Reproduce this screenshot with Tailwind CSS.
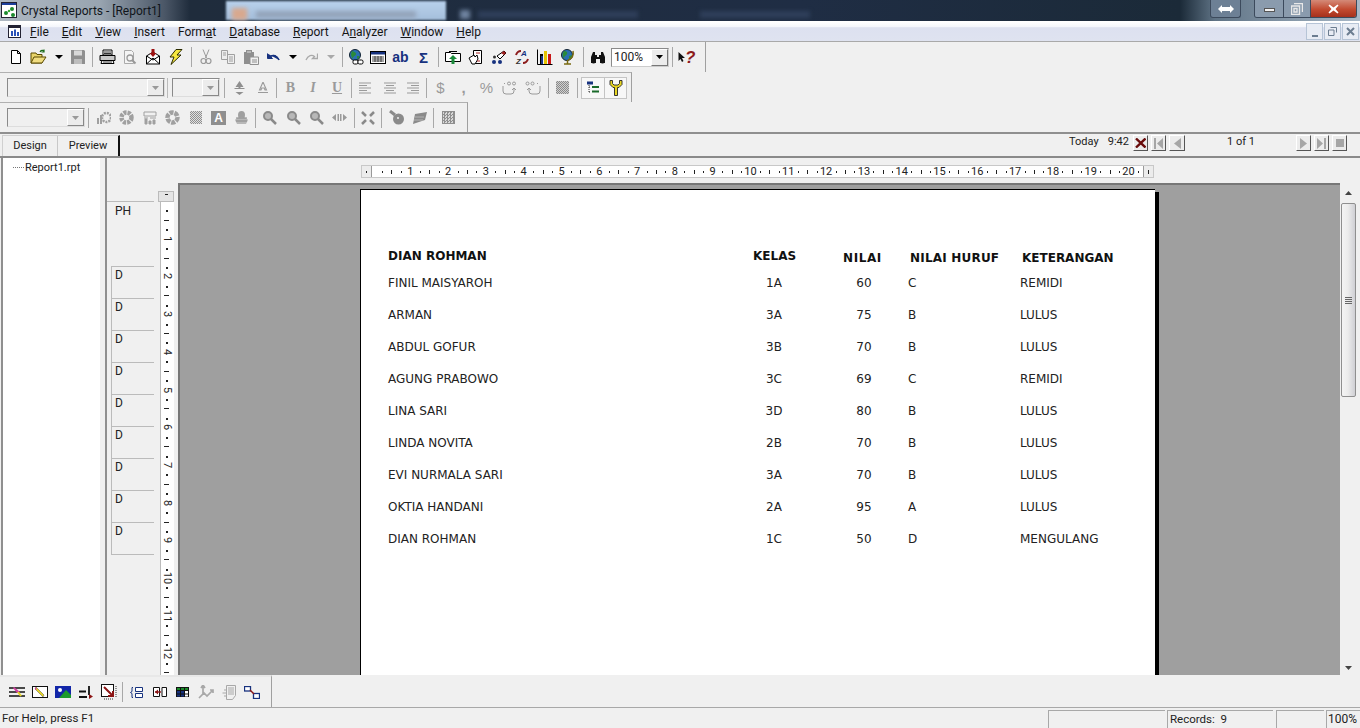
<!DOCTYPE html>
<html>
<head>
<meta charset="utf-8">
<title>Crystal Reports - [Report1]</title>
<script src="https://cdn.jsdelivr.net/npm/@tailwindcss/browser@4"></script>
</head>
<body class="w-[1360px] h-[728px] overflow-hidden bg-[#f0f0f0] text-[12px] text-[#111] font-['Roboto','Liberation_Sans',sans-serif]">

<!-- title bar -->
<div class="relative h-[21px] flex items-center overflow-hidden bg-[linear-gradient(90deg,#aeb8c2_0px,#98a4b0_100px,#4a5666_165px,#1f2c3c_190px,#1f2d44_800px,#1b2a38_1180px,#5f7385_1215px,#a9b9c8_1360px)]">
  <!-- blurred windows showing through the glass -->
  <div class="absolute left-[226px] top-[1px] w-[220px] h-[19px] bg-[linear-gradient(180deg,#b9d2ec,#a5bfdb)] blur-[1px]"></div>
  <div class="absolute left-[232px] top-[8px] w-[15px] h-[12px] bg-[#d8a88e] blur-[2px]"></div>
  <div class="absolute left-[256px] top-[11px] w-[160px] h-[7px] bg-[#93a3b9] blur-[2px]"></div>
  <div class="absolute left-[460px] top-[10px] w-[10px] h-[9px] bg-[#6f84a0] blur-[2px]"></div>
  <div class="absolute left-[478px] top-[11px] w-[160px] h-[7px] bg-[#2f3f5a] blur-[2px]"></div>
  <div class="absolute left-[700px] top-[11px] w-[110px] h-[7px] bg-[#2f3f5a] blur-[2px]"></div>
  <svg class="relative ml-[1px] w-[17px] h-[17px] shrink-0" viewBox="0 0 17 17"><rect x="0.5" y="0.5" width="15" height="15" fill="#fff" stroke="#223"/><rect x="1" y="1" width="14" height="2" fill="#1c3f9c"/><circle cx="5" cy="11" r="2" fill="#1c8a2e"/><circle cx="11" cy="7" r="2" fill="#1c8a2e"/><circle cx="12" cy="13" r="2" fill="#1c8a2e"/><circle cx="8" cy="9" r="1.2" fill="#3a3"/></svg>
  <span class="relative ml-[3px] text-[12px] text-[#10151b]">Crystal Reports - [Report1]</span>
  <div class="absolute left-[1210px] top-0 w-[31px] h-[18px] border border-t-0 border-[#3c4a5c] rounded-b-[3px] flex items-center justify-center bg-[#6d8095]">
    <svg class="w-[16px] h-[8px]" viewBox="0 0 16 8"><path d="M0 4l4-4v2h8V0l4 4-4 4V6H4v2z" fill="#fff"/></svg>
  </div>
  <div class="absolute left-[1254px] top-0 w-[103px] h-[18px] border border-t-0 border-[#3c4a5c] rounded-b-[3px] flex overflow-hidden">
    <div class="w-[29px] flex items-center justify-center bg-[#8a9bad] border-r border-[#3c4a5c]"><span class="block w-[11px] h-[4px] bg-[#f2f2f2] border border-[#555] mt-[2px]"></span></div>
    <div class="w-[27px] flex items-center justify-center bg-[#8a9bad] border-r border-[#3c4a5c]"><svg class="w-[12px] h-[12px]" viewBox="0 0 12 12"><path d="M3 0.5h8.5V9M0.5 3h8v8.5h-8zM3 5.5h3v3.5H3z" fill="none" stroke="#e8e8e8" stroke-width="1.4"/></svg></div>
    <div class="flex-1 flex items-center justify-center bg-[linear-gradient(180deg,#d48a78,#c24a30_55%,#a5301c)]"><svg class="w-[11px] h-[10px]" viewBox="0 0 11 10"><path d="M1.5 0.5l4 3 4-3 1 1-3 3.500 3 3.500-1 1-4-3-4 3-1-1 3-3.500-3-3.500z" fill="#fff"/></svg></div>
  </div>
</div>

<!-- menu bar -->
<div class="relative h-[21px] flex items-center border-t border-[#fff] border-b border-b-[#a9a9a9] bg-[linear-gradient(180deg,#fff_0%,#f4f6fb_25%,#dde1f0_30%,#dfe3f0_100%)]">
  <svg class="ml-[8px] w-[14px] h-[14px]" viewBox="0 0 14 14"><rect x="0.5" y="0.5" width="12" height="12" fill="#fff" stroke="#223"/><rect x="1" y="1" width="11" height="2" fill="#223"/><rect x="3" y="6" width="2" height="5" fill="#2a52b8"/><rect x="6" y="4.500" width="2" height="6.500" fill="#2a52b8"/><rect x="9" y="7" width="2" height="4" fill="#2a52b8"/></svg>
  <nav class="flex ml-[8px] text-[12px] text-[#151515] gap-[13px]">
    <span><u>F</u>ile</span><span><u>E</u>dit</span><span><u>V</u>iew</span><span><u>I</u>nsert</span><span>Form<u>a</u>t</span><span><u>D</u>atabase</span><span><u>R</u>eport</span><span>A<u>n</u>alyzer</span><span><u>W</u>indow</span><span><u>H</u>elp</span>
  </nav>
  <div class="absolute right-0 top-[1px] flex gap-[1px] pr-[1px]">
    <div class="w-[17px] h-[17px] border border-[#b6c4d6] flex items-end justify-center pb-[2px] bg-[#e8ecf4]"><span class="block w-[6px] h-[2px] bg-[#6c7d90]"></span></div>
    <div class="w-[17px] h-[17px] border border-[#b6c4d6] flex items-center justify-center bg-[#e8ecf4]"><svg class="w-[9px] h-[9px]" viewBox="0 0 9 9"><path d="M2.500 0.500h6v5M0.500 3h5.500v5.500h-5.500z" fill="none" stroke="#6c7d90"/></svg></div>
    <div class="w-[17px] h-[17px] border border-[#b6c4d6] flex items-center justify-center bg-[#e8ecf4]"><svg class="w-[9px] h-[9px]" viewBox="0 0 9 9"><path d="M1 1l7 7M8 1L1 8" stroke="#6c7d90" stroke-width="2"/></svg></div>
  </div>
</div>

<!-- toolbar 1 -->
<div class="h-[30px] w-[706px] flex items-center pl-[4px] border-r border-[#a0a0a0]">
  <i class="w-[23px] flex justify-center"><svg class="w-[16px] h-[16px]" viewBox="0 0 16 16"><path d="M3.500 1.500h6l3 3v10h-9zM9.500 1.500v3h3" fill="#fff" stroke="#000"/></svg></i>
  <i class="w-[23px] flex justify-center"><svg class="w-[17px] h-[16px]" viewBox="0 0 17 16"><path d="M1 14V4h5l1 1.500h5V14z" fill="#e8d46a" stroke="#5a4a00"/><path d="M1 14l3-6h12l-4 6z" fill="#f0dc80" stroke="#5a4a00"/><path d="M10 3c1-2 3-2 4-1M14 0.500v2.500h-2.500" fill="none" stroke="#1a6a1a" stroke-width="1.200"/></svg></i>
  <i class="w-[18px] flex justify-center"><svg class="w-[8px] h-[4px]" viewBox="0 0 8 4"><path d="M0 0h8L4 4z" fill="#000"/></svg></i>
  <i class="w-[20px] flex justify-center"><svg class="w-[16px] h-[16px]" viewBox="0 0 16 16"><path d="M1 1h13l1 1v13H1z" fill="#8f8f8f"/><rect x="4" y="1.500" width="8" height="5" fill="#d8d8d8"/><rect x="4" y="10" width="8" height="5" fill="#bdbdbd"/></svg></i>
  <b class="w-[9px] flex justify-center"><s class="block w-[1px] h-[20px] bg-[#a8a8a8]"></s></b>
  <i class="w-[21px] flex justify-center"><svg class="w-[17px] h-[16px]" viewBox="0 0 17 16"><path d="M4 1h9v5H4z" fill="#fff" stroke="#000"/><path d="M1 6.500h15v5H1z" fill="#c8c8c8" stroke="#000"/><path d="M3 11.500h11l1 3H2z" fill="#fff" stroke="#000"/><path d="M5 3h7M5 4.500h7M4 13h9" stroke="#000" stroke-width="0.800"/></svg></i>
  <i class="w-[24px] flex justify-center"><svg class="w-[16px] h-[16px]" viewBox="0 0 16 16"><path d="M2.500 1.500h7l2 2v11h-9z" fill="#f4f4f4" stroke="#aaa"/><circle cx="8" cy="9" r="3" fill="none" stroke="#999" stroke-width="1.300"/><path d="M10 11l3.500 3.500" stroke="#999" stroke-width="2"/></svg></i>
  <i class="w-[22px] flex justify-center"><svg class="w-[16px] h-[16px]" viewBox="0 0 16 16"><path d="M1.500 7l6.500-4 6.500 4v8h-13z" fill="#fff" stroke="#000"/><path d="M1.500 15L8 9l6.500 6M1.500 7L8 11l6.500-4" fill="none" stroke="#000"/><path d="M6.500 0h3v4h2L8 8 4.500 4h2z" fill="#9c1010"/></svg></i>
  <i class="w-[23px] flex justify-center"><svg class="w-[15px] h-[16px]" viewBox="0 0 15 16"><path d="M8 0.500h6L9 6h4L3 15.500 6 8H2z" fill="#f6e840" stroke="#2a2a00"/></svg></i>
  <b class="w-[8px] flex justify-center"><s class="block w-[1px] h-[20px] bg-[#a8a8a8]"></s></b>
  <i class="w-[21px] flex justify-center"><svg class="w-[12px] h-[16px]" viewBox="0 0 12 16"><path d="M3 0.500L6.500 9M9 0.500L5.500 9" stroke="#9a9a9a" fill="none"/><circle cx="3.500" cy="12" r="2.500" fill="none" stroke="#9a9a9a" stroke-width="1.200"/><circle cx="8.500" cy="12" r="2.500" fill="none" stroke="#9a9a9a" stroke-width="1.200"/></svg></i>
  <i class="w-[23px] flex justify-center"><svg class="w-[16px] h-[14px]" viewBox="0 0 16 14"><path d="M1.500 0.500h6v9h-6zM7.500 4.500h7v9h-7z" fill="#eee" stroke="#a0a0a0"/><path d="M3 3h3M3 5h3M9 7h4M9 9h4M9 11h4" stroke="#a0a0a0"/></svg></i>
  <i class="w-[23px] flex justify-center"><svg class="w-[16px] h-[15px]" viewBox="0 0 16 15"><path d="M1 2h10v12H1z" fill="#8f8f8f"/><rect x="3.500" y="0.500" width="5" height="3" fill="#b8b8b8" stroke="#8f8f8f"/><path d="M7 7h8.500v7.500H7z" fill="#f0f0f0" stroke="#8f8f8f"/><path d="M9 10h5M9 12h5" stroke="#8f8f8f"/></svg></i>
  <i class="w-[23px] flex justify-center"><svg class="w-[13px] h-[9px]" viewBox="0 0 13 9"><path d="M0.500 0.500v5h5L3.500 3.500C6 1.500 10 2 12 7" fill="#17327f" stroke="#17327f" stroke-linejoin="round"/><path d="M3.500 3.500C6 1.500 10 2 12 7" fill="none" stroke="#17327f" stroke-width="1.500"/></svg></i>
  <i class="w-[16px] flex justify-center"><svg class="w-[8px] h-[4px]" viewBox="0 0 8 4"><path d="M0 0h8L4 4z" fill="#000"/></svg></i>
  <i class="w-[21px] flex justify-center"><svg class="w-[13px] h-[9px]" viewBox="0 0 13 9"><path d="M12.500 0.500v5h-5l2-2C7 1.500 3 2 1 7" fill="none" stroke="#a9a9a9" stroke-width="1.300"/></svg></i>
  <i class="w-[17px] flex justify-center"><svg class="w-[8px] h-[4px]" viewBox="0 0 8 4"><path d="M0 0h8L4 4z" fill="#a9a9a9"/></svg></i>
  <b class="w-[6px] flex justify-center"><s class="block w-[1px] h-[20px] bg-[#a8a8a8]"></s></b>
  <i class="w-[21px] flex justify-center"><svg class="w-[16px] h-[16px]" viewBox="0 0 16 16"><circle cx="7" cy="6" r="5.500" fill="#2a6fb0" stroke="#123"/><path d="M4 2c2 1 4 1 4 3S5 7 5 9 3 7 3 5zM9 7c2 0 3 0 2 2l-2 1z" fill="#2a8a3a"/><rect x="5" y="11" width="5" height="4" rx="1.500" fill="#fff" stroke="#000"/><rect x="10" y="11" width="5" height="4" rx="1.500" fill="#fff" stroke="#000"/></svg></i>
  <i class="w-[23px] flex justify-center"><svg class="w-[16px] h-[13px]" viewBox="0 0 16 13"><rect x="0.500" y="0.500" width="15" height="12" fill="#fff" stroke="#000"/><rect x="1" y="1" width="14" height="2.500" fill="#17327f"/><path d="M2 6h12M2 8h12M2 10h12M5 5v6M8 5v6M11 5v6" stroke="#333" stroke-width="0.900"/></svg></i>
  <i class="w-[23px] flex justify-center not-italic font-bold text-[14px] leading-none text-[#17327f] font-['Liberation_Sans']">ab</i>
  <i class="w-[23px] flex justify-center not-italic font-bold text-[15px] leading-none text-[#17327f] font-['Liberation_Sans']">Σ</i>
  <b class="w-[7px] flex justify-center"><s class="block w-[1px] h-[20px] bg-[#a8a8a8]"></s></b>
  <i class="w-[22px] flex justify-center"><svg class="w-[16px] h-[16px]" viewBox="0 0 16 16"><path d="M0.500 3.500h5l1 1h9v8h-15z" fill="#fff" stroke="#000"/><path d="M4 2.500h8" stroke="#000"/><path d="M8 6l4 4H9.500v5h-3v-5H4z" fill="#1a8a3a"/></svg></i>
  <i class="w-[23px] flex justify-center"><svg class="w-[15px] h-[16px]" viewBox="0 0 15 16"><path d="M5.500 1.500h8v13h-8z" fill="#fff" stroke="#000"/><path d="M1 9l5-3 1 2 2-2 1 4-3 5H4z" fill="#fff" stroke="#000"/><path d="M8 4h4M9 12h3" stroke="#a12020"/></svg></i>
  <i class="w-[23px] flex justify-center"><svg class="w-[16px] h-[16px]" viewBox="0 0 16 16"><circle cx="3" cy="13" r="2" fill="#17327f"/><circle cx="9" cy="13" r="2" fill="#17327f"/><circle cx="3.500" cy="8" r="1.500" fill="#333"/><path d="M6 7l7-5 2 2-6 6z" fill="#fff" stroke="#000"/><path d="M10 4l3-2 2 2-2 2z" fill="#a12020"/></svg></i>
  <i class="w-[23px] flex justify-center"><svg class="w-[16px] h-[16px]" viewBox="0 0 16 16"><path d="M2 6c1-3 3-4 5-4M14 10c-1 3-3 4-5 4" fill="none" stroke="#8c1c1c" stroke-width="2"/><text x="7" y="7" font-size="8" font-weight="bold" fill="#17327f" font-family="Liberation Sans">A</text><text x="2" y="15" font-size="8" font-weight="bold" fill="#333" font-family="Liberation Sans">Z</text></svg></i>
  <i class="w-[23px] flex justify-center"><svg class="w-[16px] h-[16px]" viewBox="0 0 16 16"><path d="M0.500 0.500v15h15" fill="none" stroke="#000"/><rect x="3" y="5" width="3" height="10" fill="#000"/><rect x="7" y="2" width="3" height="13" fill="#e6c400"/><rect x="11" y="5" width="3" height="10" fill="#c81818"/><rect x="4" y="7" width="2" height="8" fill="#17327f"/></svg></i>
  <i class="w-[22px] flex justify-center"><svg class="w-[15px] h-[16px]" viewBox="0 0 15 16"><circle cx="7" cy="6" r="5.500" fill="#2a6fb0" stroke="#123"/><path d="M4 2c2 0 4 1 3 3S4 7 4 9 2 6 3 4zM9 7l3-1-1 3-2 1z" fill="#2a8a3a"/><path d="M13 2c1 4-1 8-5 9M4 15h7M7.500 11v4" fill="none" stroke="#7a6a10" stroke-width="1.500"/></svg></i>
  <b class="w-[11px] flex justify-center"><s class="block w-[1px] h-[20px] bg-[#a8a8a8]"></s></b>
  <i class="w-[18px] flex justify-center"><svg class="w-[16px] h-[15px]" viewBox="0 0 16 15"><path d="M1 7l2-5h2v3h2v2h2V5h2V2h2l2 5v6H10V9H6v4H1z" fill="#111"/><circle cx="3.500" cy="11" r="2.500" fill="#111"/><circle cx="12.500" cy="11" r="2.500" fill="#111"/></svg></i>
  <div class="ml-[4px] w-[58px] h-[19px] flex border border-[#8a8a8a] border-r-[#ccc] border-b-[#ccc] bg-white items-center">
    <span class="flex-1 pl-[2px] text-[12px] leading-none text-[#222]">100%</span>
    <span class="w-[17px] h-[17px] flex items-center justify-center bg-[#ececec] border border-[#fff] border-r-[#777] border-b-[#777]"><svg class="w-[7px] h-[4px]" viewBox="0 0 7 4"><path d="M0 0h7L3.500 4z" fill="#000"/></svg></span>
  </div>
  <b class="w-[7px] flex justify-center"><s class="block w-[1px] h-[20px] bg-[#a8a8a8]"></s></b>
  <i class="w-[22px] flex justify-center"><svg class="w-[18px] h-[18px]" viewBox="0 0 18 18"><path d="M0.500 4v9l2-2 1.500 3 1.500-1-1.500-3h3z" fill="#111"/><text x="7" y="15" font-size="17" font-weight="bold" fill="#8c1c1c" font-family="Liberation Sans">?</text></svg></i>
</div>

<!-- toolbar 2 -->
<div class="h-[30px] w-[632px] flex items-center border-t border-[#b0b0b0] border-r border-r-[#a0a0a0] pl-[7px] text-[#a0a0a0]">
  <div class="w-[158px] h-[19px] flex justify-end border border-[#8a8a8a] border-r-[#ddd] border-b-[#ddd]"><span class="w-[17px] h-[17px] flex items-center justify-center bg-[#ececec] border border-[#fff] border-r-[#888] border-b-[#888]"><svg class="w-[7px] h-[4px]" viewBox="0 0 7 4"><path d="M0 0h7L3.500 4z" fill="#999"/></svg></span></div>
  <s class="block ml-[2px] w-[1px] h-[20px] bg-[#bbb]"></s>
  <div class="ml-[4px] w-[48px] h-[19px] flex justify-end border border-[#8a8a8a] border-r-[#ddd] border-b-[#ddd]"><span class="w-[17px] h-[17px] flex items-center justify-center bg-[#ececec] border border-[#fff] border-r-[#888] border-b-[#888]"><svg class="w-[7px] h-[4px]" viewBox="0 0 7 4"><path d="M0 0h7L3.500 4z" fill="#999"/></svg></span></div>
  <b class="w-[8px] flex justify-center"><s class="block w-[1px] h-[20px] bg-[#a8a8a8]"></s></b>
  <i class="w-[23px] flex justify-center"><svg class="w-[13px] h-[16px]" viewBox="0 0 13 16"><path d="M6.500 1L2.500 7h3v1h-4l0 1h10V8h-4V7h3zM6.500 15l4-3h-8z" fill="#8f8f8f"/></svg></i>
  <i class="w-[23px] flex justify-center"><svg class="w-[10px] h-[12px]" viewBox="0 0 10 12"><path d="M5 0L1.500 8h1.500l.8-2h2.400l.8 2h1.500zM0 10.500h10" fill="none" stroke="#9a9a9a" stroke-width="1.100"/></svg></i>
  <b class="w-[5px] flex justify-center"><s class="block w-[1px] h-[20px] bg-[#a8a8a8]"></s></b>
  <i class="w-[23px] flex justify-center not-italic font-bold text-[14px] leading-none text-[#9a9a9a] font-['Liberation_Serif']">B</i>
  <i class="w-[22px] flex justify-center italic font-bold text-[14px] leading-none text-[#9a9a9a] font-['Liberation_Serif']">I</i>
  <i class="w-[26px] flex justify-center not-italic font-bold text-[14px] leading-none underline text-[#9a9a9a] font-['Liberation_Serif']">U</i>
  <b class="w-[2px] flex justify-center"><s class="block w-[1px] h-[20px] bg-[#a8a8a8]"></s></b>
  <i class="w-[26px] flex justify-center"><svg class="w-[12px] h-[12px]" viewBox="0 0 12 12"><path d="M0 1h12M0 3.500h8M0 6h12M0 8.500h8M0 11h12" stroke="#9a9a9a"/></svg></i>
  <i class="w-[23px] flex justify-center"><svg class="w-[12px] h-[12px]" viewBox="0 0 12 12"><path d="M0 1h12M2 3.500h8M0 6h12M2 8.500h8M0 11h12" stroke="#9a9a9a"/></svg></i>
  <i class="w-[23px] flex justify-center"><svg class="w-[12px] h-[12px]" viewBox="0 0 12 12"><path d="M0 1h12M4 3.500h8M0 6h12M4 8.500h8M0 11h12" stroke="#9a9a9a"/></svg></i>
  <b class="w-[5px] flex justify-center"><s class="block w-[1px] h-[20px] bg-[#a8a8a8]"></s></b>
  <i class="w-[23px] flex justify-center not-italic font-normal text-[15px] leading-none text-[#9a9a9a] font-['Liberation_Sans']">$</i>
  <i class="w-[23px] flex justify-center not-italic font-bold text-[15px] leading-none text-[#9a9a9a] font-['Liberation_Sans']">,</i>
  <i class="w-[23px] flex justify-center not-italic font-normal text-[15px] leading-none text-[#9a9a9a] font-['Liberation_Sans']">%</i>
  <i class="w-[23px] flex justify-center"><svg class="w-[16px] h-[14px]" viewBox="0 0 16 14"><path d="M1 5v5a3 3 0 0 0 3 3h5a3 3 0 0 0 3-3V8M10 9l2-2 2 2" fill="none" stroke="#9a9a9a"/><circle cx="7" cy="2.500" r="1.500" fill="none" stroke="#9a9a9a"/><circle cx="12" cy="2.500" r="1.500" fill="none" stroke="#9a9a9a"/><rect x="2" y="2" width="1" height="1" fill="#9a9a9a"/></svg></i>
  <i class="w-[24px] flex justify-center"><svg class="w-[16px] h-[14px]" viewBox="0 0 16 14"><path d="M15 5v5a3 3 0 0 1-3 3H7a3 3 0 0 1-3-3V8M2 9l2-2 2 2" fill="none" stroke="#9a9a9a"/><circle cx="2.500" cy="2.500" r="1.500" fill="none" stroke="#9a9a9a"/><circle cx="7.500" cy="2.500" r="1.500" fill="none" stroke="#9a9a9a"/><rect x="12" y="2" width="1" height="1" fill="#9a9a9a"/></svg></i>
  <b class="w-[6px] flex justify-center"><s class="block w-[1px] h-[20px] bg-[#a8a8a8]"></s></b>
  <i class="w-[22px] flex justify-center"><span class="block w-[13px] h-[13px] bg-[repeating-conic-gradient(#8a8a8a_0_25%,#d0d0d0_0_50%)] bg-[length:2px_2px]"></span></i>
  <b class="w-[8px] flex justify-center"><s class="block w-[1px] h-[20px] bg-[#a8a8a8]"></s></b>
  <div class="w-[23px] h-[22px] flex items-center justify-center bg-[#f7f7f7] border border-[#c4c4c4] border-r-0"><svg class="w-[14px] h-[14px]" viewBox="0 0 14 14"><rect x="1" y="0.500" width="6" height="3" fill="#17327f"/><path d="M3 4v8M3 6h2M3 11h2" stroke="#333" stroke-dasharray="1 1"/><rect x="6" y="5" width="7" height="2" fill="#1a6a2a"/><rect x="6" y="9.500" width="7" height="2" fill="#1a6a2a"/></svg></div>
  <div class="w-[23px] h-[22px] flex items-center justify-center bg-[#f7f7f7] border border-[#c4c4c4]"><svg class="w-[14px] h-[18px]" viewBox="0 0 14 18"><path d="M1 1.500v4l3 3h1.500v8h3v-8H10l3-3v-4h-2.500v3L9 6H5L3.500 4.500v-3z" fill="#e6d422" stroke="#222" stroke-width="0.900"/></svg></div>
</div>

<!-- toolbar 3 -->
<div class="h-[30px] w-[468px] flex items-center border-t border-[#b0b0b0] border-r border-r-[#a0a0a0] pl-[7px]">
  <div class="w-[78px] h-[19px] flex justify-end border border-[#8a8a8a] border-r-[#ddd] border-b-[#ddd]"><span class="w-[17px] h-[17px] flex items-center justify-center bg-[#ececec] border border-[#fff] border-r-[#888] border-b-[#888]"><svg class="w-[7px] h-[4px]" viewBox="0 0 7 4"><path d="M0 0h7L3.500 4z" fill="#999"/></svg></span></div>
  <b class="w-[7px] flex justify-center"><s class="block w-[1px] h-[20px] bg-[#a8a8a8]"></s></b>
  <i class="w-[23px] flex justify-center"><svg class="w-[15px] h-[15px]" viewBox="0 0 15 15"><path d="M1 8h2v6H1zM4 5h2v9H4z" fill="#a0a0a0"/><circle cx="10.500" cy="7.500" r="4.500" fill="none" stroke="#a0a0a0" stroke-width="2.500" stroke-dasharray="2 1"/></svg></i>
  <i class="w-[23px] flex justify-center"><svg class="w-[15px] h-[15px]" viewBox="0 0 15 15"><circle cx="7.500" cy="7.500" r="5" fill="none" stroke="#a0a0a0" stroke-width="4.500" stroke-dasharray="3 1"/></svg></i>
  <i class="w-[23px] flex justify-center"><svg class="w-[14px] h-[14px]" viewBox="0 0 14 14"><path d="M1 1h12v4H1z" fill="none" stroke="#a0a0a0"/><path d="M1 7h4M7 7h6M2 8v5h2V8zM6 10v3h2v-3zM10 9v4h2V9z" stroke="#a0a0a0" fill="#a0a0a0"/></svg></i>
  <i class="w-[23px] flex justify-center"><svg class="w-[15px] h-[15px]" viewBox="0 0 15 15"><circle cx="7.500" cy="7.500" r="5" fill="none" stroke="#a0a0a0" stroke-width="4.500" stroke-dasharray="4 1"/></svg></i>
  <i class="w-[23px] flex justify-center"><span class="block w-[12px] h-[13px] bg-[repeating-conic-gradient(#8f8f8f_0_25%,#e0e0e0_0_50%)] bg-[length:2px_2px]"></span></i>
  <i class="w-[23px] flex justify-center not-italic"><span class="w-[15px] h-[14px] bg-[#8f8f8f] text-white font-bold text-[12px] leading-[14px] text-center font-['Liberation_Sans']">A</span></i>
  <i class="w-[23px] flex justify-center"><svg class="w-[15px] h-[15px]" viewBox="0 0 15 15"><ellipse cx="7.500" cy="5" rx="3.500" ry="4" fill="#a0a0a0"/><path d="M1 10c2-4 11-4 13 0l-2 4H3z" fill="#b8b8b8"/><path d="M2 8h11M2 11h11" stroke="#8a8a8a"/></svg></i>
  <b class="w-[5px] flex justify-center"><s class="block w-[1px] h-[20px] bg-[#a8a8a8]"></s></b>
  <i class="w-[23px] flex justify-center"><svg class="w-[15px] h-[15px]" viewBox="0 0 15 15"><circle cx="6" cy="6" r="4" fill="#b8b8b8" stroke="#8a8a8a" stroke-width="2"/><path d="M9 9l5 5" stroke="#8a8a8a" stroke-width="2.500"/></svg></i>
  <i class="w-[24px] flex justify-center"><svg class="w-[15px] h-[15px]" viewBox="0 0 15 15"><circle cx="6" cy="6" r="4" fill="#b8b8b8" stroke="#8a8a8a" stroke-width="2"/><path d="M9 9l5 5" stroke="#8a8a8a" stroke-width="2.500"/></svg></i>
  <i class="w-[23px] flex justify-center"><svg class="w-[15px] h-[15px]" viewBox="0 0 15 15"><circle cx="6" cy="6" r="4" fill="#b8b8b8" stroke="#8a8a8a" stroke-width="2"/><path d="M9 9l5 5" stroke="#8a8a8a" stroke-width="2.500"/></svg></i>
  <i class="w-[23px] flex justify-center"><svg class="w-[15px] h-[9px]" viewBox="0 0 15 9"><path d="M4 1v7L0 4.500zM11 1v7l4-3.500z" fill="#9a9a9a"/><rect x="5.500" y="1" width="1.500" height="7" fill="#9a9a9a"/><rect x="8" y="1" width="1.500" height="7" fill="#9a9a9a"/></svg></i>
  <b class="w-[6px] flex justify-center"><s class="block w-[1px] h-[20px] bg-[#a8a8a8]"></s></b>
  <i class="w-[21px] flex justify-center"><svg class="w-[14px] h-[14px]" viewBox="0 0 14 14"><path d="M1 1l4 4M13 1L9 5M1 13l4-4M13 13L9 9" stroke="#8a8a8a" stroke-width="2.500"/></svg></i>
  <b class="w-[7px] flex justify-center"><s class="block w-[1px] h-[20px] bg-[#a8a8a8]"></s></b>
  <i class="w-[23px] flex justify-center"><svg class="w-[16px] h-[15px]" viewBox="0 0 16 15"><circle cx="9.500" cy="9" r="5.500" fill="#8a8a8a"/><path d="M1 1l5 4" stroke="#8a8a8a" stroke-width="3"/><circle cx="9" cy="8" r="1" fill="#eee"/></svg></i>
  <i class="w-[23px] flex justify-center"><svg class="w-[15px] h-[12px]" viewBox="0 0 15 12"><path d="M3 2l12-2-2 8-12 4z" fill="#8a8a8a"/><path d="M3 5h9M2 8h9" stroke="#b5b5b5"/></svg></i>
  <b class="w-[5px] flex justify-center"><s class="block w-[1px] h-[20px] bg-[#a8a8a8]"></s></b>
  <i class="w-[24px] flex justify-center"><span class="block w-[13px] h-[13px] bg-[repeating-conic-gradient(#8f8f8f_0_25%,#d8d8d8_0_50%)] bg-[length:3px_3px] border border-[#8f8f8f]"></span></i>
</div>

<!-- tabs + record navigation -->
<div class="h-[26px] relative flex border-t-2 border-[#8f8f8f] border-b-2 border-b-[#8a8a8a]">
  <div class="ml-[2px] mt-[1px] w-[118px] h-[21px] flex border border-b-0 border-[#d0d0d0] border-r-[#111] border-r-2 text-[11px] text-[#222]">
    <span class="w-[55px] text-center leading-[20px] border-r border-[#c8c8c8]">Design</span>
    <span class="flex-1 text-center leading-[20px]">Preview</span>
  </div>
  <div class="absolute left-[1069px] -top-[1px] h-[18px] flex items-center text-[11px] text-[#222]"><span class="w-[36px]">Today</span><span>&nbsp;9:42</span></div>
  <div class="absolute left-[1133px] top-[1px] flex">
    <span class="w-[15px] h-[16px] flex items-center justify-center border border-[#fff] border-r-[#555] border-b-[#555] bg-[#ececec]"><svg class="w-[11px] h-[10px]" viewBox="0 0 11 10"><path d="M1 0.500l9.500 9M10.500 0.500L1 9.500" stroke="#6a0c0c" stroke-width="2.400"/></svg></span>
    <span class="ml-[3px] w-[15px] h-[16px] flex items-center justify-center border border-[#fff] border-r-[#555] border-b-[#555] bg-[#ececec]"><svg class="w-[9px] h-[11px]" viewBox="0 0 9 11"><path d="M0 0h2v11H0zM9 0v11L3 5.500z" fill="#a6a6a6"/></svg></span>
    <span class="ml-[3px] w-[16px] h-[16px] flex items-center justify-center border border-[#fff] border-r-[#555] border-b-[#555] bg-[#ececec]"><svg class="w-[7px] h-[11px]" viewBox="0 0 7 11"><path d="M7 0v11L0 5.500z" fill="#a6a6a6"/></svg></span>
  </div>
  <span class="absolute left-[1227px] -top-[1px] h-[18px] leading-[18px] text-[11px] text-[#222]">1 of 1</span>
  <div class="absolute left-[1296px] top-[1px] flex">
    <span class="w-[15px] h-[16px] flex items-center justify-center border border-[#fff] border-r-[#555] border-b-[#555] bg-[#ececec]"><svg class="w-[7px] h-[11px]" viewBox="0 0 7 11"><path d="M0 0v11l7-5.500z" fill="#a6a6a6"/></svg></span>
    <span class="ml-[3px] w-[15px] h-[16px] flex items-center justify-center border border-[#fff] border-r-[#555] border-b-[#555] bg-[#ececec]"><svg class="w-[9px] h-[11px]" viewBox="0 0 9 11"><path d="M9 0H7v11h2zM0 0v11l6-5.500z" fill="#a6a6a6"/></svg></span>
    <span class="ml-[3px] w-[15px] h-[16px] flex items-center justify-center border border-[#fff] border-r-[#555] border-b-[#555] bg-[#ececec]"><span class="block w-[8px] h-[8px] bg-[#a6a6a6]"></span></span>
  </div>
</div>

<!-- main area -->
<div class="h-[517px] flex overflow-hidden">
  <!-- report tree -->
  <div class="ml-[1px] w-[99px] border-l-2 border-[#8f8f8f] bg-white text-[11px] text-[#222] flex items-start pt-[2px]">
    <span class="ml-[10px] mt-[7px] w-[11px] border-t border-dotted border-[#777]"></span>
    <span class="ml-[1px] leading-[15px]">Report1.rpt</span>
  </div>
  <div class="ml-[5px] flex-1 border-l-2 border-[#8f8f8f] flex flex-col min-w-0">
    <!-- top ruler -->
    <div class="h-[25px] shrink-0 pt-[7px] pl-[254px]">
      <div id="hruler" class="relative w-[793px] h-[13px] bg-white border border-[#c8c8c8] text-[11px] leading-[12px] text-[#222] overflow-hidden">
        <span class="absolute left-0 top-0 w-[10px] h-[12px] bg-[#ececec] border-r border-[#999] flex items-center justify-center"><s class="block w-[1px] h-[2px] bg-[#222]"></s></span>
        <span class="absolute right-0 top-0 w-[10px] h-[12px] bg-[#ececec] border-l border-[#999] flex items-center justify-center"><s class="block w-[1px] h-[4px] bg-[#222]"></s></span>
      </div>
    </div>
    <div class="flex-1 flex min-h-0">
      <!-- section labels -->
      <div class="w-[47px] shrink-0 text-[12px] text-[#222] pt-[18px]">
        <div class="h-[65px] border-t border-[#bbb] pl-[8px] leading-[16px] pt-[1px]">PH</div>
        <div class="ml-[4px] border-l border-[#bbb] border-b">
          <div class="h-[32px] border-t border-[#bbb] pl-[3px] pt-[1px] leading-[15px]">D</div>
          <div class="h-[32px] border-t border-[#bbb] pl-[3px] pt-[1px] leading-[15px]">D</div>
          <div class="h-[32px] border-t border-[#bbb] pl-[3px] pt-[1px] leading-[15px]">D</div>
          <div class="h-[32px] border-t border-[#bbb] pl-[3px] pt-[1px] leading-[15px]">D</div>
          <div class="h-[32px] border-t border-[#bbb] pl-[3px] pt-[1px] leading-[15px]">D</div>
          <div class="h-[32px] border-t border-[#bbb] pl-[3px] pt-[1px] leading-[15px]">D</div>
          <div class="h-[32px] border-t border-[#bbb] pl-[3px] pt-[1px] leading-[15px]">D</div>
          <div class="h-[32px] border-t border-[#bbb] pl-[3px] pt-[1px] leading-[15px]">D</div>
          <div class="h-[32px] border-t border-[#bbb] pl-[3px] pt-[1px] leading-[15px]">D</div>
        </div>
      </div>
      <!-- side ruler -->
      <div class="ml-[4px] mr-[4px] w-[16px] shrink-0 pt-[8px]">
        <div class="h-[11px] bg-[#e4e4e4] border border-[#bbb] flex justify-center"><s class="block w-[3px] h-[1px] mt-[2px] bg-[#222]"></s></div>
        <div id="vruler" class="relative ml-[2px] h-[480px] w-[14px] overflow-hidden bg-white border-l border-[#bbb] text-[11px] text-[#222]"></div>
      </div>
      <!-- page area -->
      <div class="flex-1 min-w-0 flex border-t-2 border-l-2 border-[#777] bg-[#9f9f9f]">
        <div class="ml-[180px] mt-[4px] w-[799px] h-[600px] pr-[4px] shrink-0 relative">
          <div class="absolute right-0 top-[3px] bottom-0 w-[4px] bg-black"></div>
          <div class="w-[795px] h-full bg-white border-l border-t border-black pt-[56px] pl-[27px] text-[12px] text-[#222] font-['DejaVu_Sans','Liberation_Sans',sans-serif]">
            <div class="relative h-[24px] font-bold text-[#111] text-[12px]">
              <span class="absolute left-0 top-[2px] leading-[16px]">DIAN ROHMAN</span>
              <span class="absolute left-[365px] top-[2px] leading-[16px]">KELAS</span>
              <span class="absolute left-[455px] top-[4px] leading-[16px] tracking-[0.6px]">NILAI</span>
              <span class="absolute left-[522px] top-[4px] leading-[16px] tracking-[0.2px]">NILAI HURUF</span>
              <span class="absolute left-[634px] top-[4px] leading-[16px]">KETERANGAN</span>
            </div>
            <div class="grid grid-cols-[344px_84px_96px_108px_auto] auto-rows-[32px] mt-[5px] leading-[16px]">
              <span>FINIL MAISYAROH</span><span class="text-center">1A</span><span class="text-center">60</span><span class="-ml-[4px]">C</span><span>REMIDI</span>
              <span>ARMAN</span><span class="text-center">3A</span><span class="text-center">75</span><span class="-ml-[4px]">B</span><span>LULUS</span>
              <span>ABDUL GOFUR</span><span class="text-center">3B</span><span class="text-center">70</span><span class="-ml-[4px]">B</span><span>LULUS</span>
              <span>AGUNG PRABOWO</span><span class="text-center">3C</span><span class="text-center">69</span><span class="-ml-[4px]">C</span><span>REMIDI</span>
              <span>LINA SARI</span><span class="text-center">3D</span><span class="text-center">80</span><span class="-ml-[4px]">B</span><span>LULUS</span>
              <span>LINDA NOVITA</span><span class="text-center">2B</span><span class="text-center">70</span><span class="-ml-[4px]">B</span><span>LULUS</span>
              <span>EVI NURMALA SARI</span><span class="text-center">3A</span><span class="text-center">70</span><span class="-ml-[4px]">B</span><span>LULUS</span>
              <span>OKTIA HANDANI</span><span class="text-center">2A</span><span class="text-center">95</span><span class="-ml-[4px]">A</span><span>LULUS</span>
              <span>DIAN ROHMAN</span><span class="text-center">1C</span><span class="text-center">50</span><span class="-ml-[4px]">D</span><span>MENGULANG</span>
            </div>
          </div>
        </div>
      </div>
      <!-- scrollbar -->
      <div class="w-[17px] shrink-0 bg-[#f0f0f0] flex flex-col items-center relative">
        <svg class="mt-[8px] w-[7px] h-[4px]" viewBox="0 0 7 4"><path d="M3.500 0L7 4H0z" fill="#444"/></svg>
        <div class="mt-[8px] w-[15px] h-[194px] border border-[#8f8f8f] rounded-[2px] bg-[linear-gradient(90deg,#f4f4f4,#ececec_45%,#cfcfd4)] flex flex-col items-center justify-center gap-[1px]">
          <s class="block w-[7px] h-[1px] bg-[#666]"></s><s class="block w-[7px] h-[1px] bg-[#666]"></s><s class="block w-[7px] h-[1px] bg-[#666]"></s><s class="block w-[7px] h-[1px] bg-[#666]"></s>
        </div>
        <svg class="absolute bottom-[5px] w-[7px] h-[4px]" viewBox="0 0 7 4"><path d="M0 0h7L3.500 4z" fill="#444"/></svg>
      </div>
      <div class="w-[3px] shrink-0"></div>
    </div>
  </div>
</div>

<!-- bottom toolbar -->
<div class="h-[32px] w-[272px] flex items-center pl-[5px] border-t-2 border-[#e8e8e8] border-r border-r-[#a0a0a0]">
  <i class="w-[23px] flex justify-center"><svg class="w-[16px] h-[12px]" viewBox="0 0 16 12"><path d="M0 2h16M0 6h16M0 10h16" stroke="#111" stroke-width="1.400"/><path d="M5 1l6 5-3 1-4-5z" fill="#d040a0"/><path d="M9 6l3 4" stroke="#e6d422" stroke-width="2"/></svg></i>
  <i class="w-[23px] flex justify-center"><svg class="w-[16px] h-[12px]" viewBox="0 0 16 12"><rect x="0.500" y="0.500" width="15" height="11" fill="#fff" stroke="#111"/><path d="M4 1l8 8-1 2-8-8z" fill="#e6d422" stroke="#555" stroke-width="0.500"/><path d="M3 1l2 2-2 1z" fill="#d040a0"/></svg></i>
  <i class="w-[23px] flex justify-center"><svg class="w-[16px] h-[12px]" viewBox="0 0 16 12"><rect width="16" height="12" fill="#1226a8"/><circle cx="5" cy="4" r="2" fill="#fff"/><path d="M4 12l7-8 5 5v3z" fill="#1c9a2c"/></svg></i>
  <i class="w-[23px] flex justify-center"><svg class="w-[14px] h-[13px]" viewBox="0 0 14 13"><path d="M0 5.500h7M10 0v9M0 11h8" stroke="#111" stroke-width="1.800"/><path d="M10 8v5l4-2.500z" fill="#8c1414"/></svg></i>
  <i class="w-[23px] flex justify-center"><svg class="w-[16px] h-[16px]" viewBox="0 0 16 16"><rect x="0.500" y="0.500" width="12" height="12" fill="#fff" stroke="#111"/><path d="M3 3l9 9M12 7v5H7" fill="none" stroke="#8c1414" stroke-width="2"/><path d="M3 15h10M15 2v12" stroke="#333" stroke-dasharray="1 1"/></svg></i>
  <b class="w-[5px] flex justify-center"><s class="block w-[1px] h-[20px] bg-[#a8a8a8]"></s></b>
  <i class="w-[23px] flex justify-center"><svg class="w-[13px] h-[11px]" viewBox="0 0 13 11"><path d="M3 0.500h-1v4l-1.500 1 1.500 1v4h1" fill="none" stroke="#17327f"/><path d="M5.500 0.500h7v4h-7zM5.500 6.500h7v4h-7z" fill="#fff" stroke="#17327f"/></svg></i>
  <i class="w-[23px] flex justify-center"><svg class="w-[14px] h-[10px]" viewBox="0 0 14 10"><path d="M0.500 0.500h6v9h-6zM9 0.500h4.500v9H9z" fill="#fff" stroke="#111"/><path d="M2 5h6" stroke="#8c1414" stroke-width="1.400"/><path d="M2 5l3-2.500v5z" fill="#8c1414"/></svg></i>
  <i class="w-[23px] flex justify-center"><svg class="w-[13px] h-[10px]" viewBox="0 0 13 10"><rect width="13" height="10" fill="#111"/><rect x="1" y="1" width="3" height="2" fill="#1a8a2a"/><rect x="5" y="1" width="3" height="2" fill="#1a8a2a"/><rect x="9" y="1" width="3" height="2" fill="#1a8a2a"/><rect x="1" y="4" width="3" height="2.500" fill="#17327f"/><rect x="5" y="4" width="3" height="2.500" fill="#17327f"/><rect x="9" y="4" width="3" height="2.500" fill="#fff"/><rect x="1" y="7.500" width="3" height="2" fill="#17327f"/><rect x="5" y="7.500" width="3" height="2" fill="#17327f"/><rect x="9" y="7.500" width="3" height="2" fill="#fff"/></svg></i>
  <i class="w-[23px] flex justify-center"><svg class="w-[16px] h-[14px]" viewBox="0 0 16 14"><path d="M1 13l5-5 3 3 6-6M3 3l2-3 2 3M5 1v8M12 5l3 0v3" fill="none" stroke="#a8a8a8" stroke-width="1.700"/></svg></i>
  <i class="w-[23px] flex justify-center"><svg class="w-[14px] h-[15px]" viewBox="0 0 14 15"><path d="M4.500 0.500h9v10l-3 4h-6zM0.500 8h4M2 5h2M2 11h2" fill="none" stroke="#a8a8a8"/><path d="M6 3h6M6 5h6M6 7h6M6 9h6" stroke="#a8a8a8"/></svg></i>
  <i class="w-[23px] flex justify-center"><svg class="w-[16px] h-[13px]" viewBox="0 0 16 13"><rect x="0.500" y="0.500" width="6" height="4.500" fill="#fff" stroke="#17327f" stroke-width="1.300"/><rect x="9.500" y="7.500" width="6" height="5" fill="#fff" stroke="#17327f" stroke-width="1.300"/><path d="M6 4l4 4" stroke="#8c1414" stroke-width="1.400"/></svg></i>
</div>

<!-- status bar -->
<div class="relative h-[21px] border-t border-[#a8a8a8] flex items-center pt-[1px] text-[11.5px] text-[#222]">
  <span class="ml-[2px]">For Help, press F1</span>
  <div class="absolute left-[1048px] top-[2px] w-[117px] h-[18px] border-l border-t border-[#a8a8a8]"></div>
  <div class="absolute left-[1167px] top-[2px] w-[106px] h-[18px] border-l border-t border-[#a8a8a8] pl-[2px] leading-[17px]">Records:&nbsp; 9</div>
  <div class="absolute left-[1276px] top-[2px] w-[48px] h-[18px] border-l border-t border-[#a8a8a8]"></div>
  <div class="absolute left-[1326px] top-[2px] w-[34px] h-[18px] border-l border-t border-[#a8a8a8] pl-[1px] leading-[17px] text-[12px]">100%</div>
</div>

<script>
  // rulers: ticks at each quarter, number on each whole unit
  const step = 37.8;
  const hruler = document.getElementById('hruler');
  for (let n = 0; n < 21; n++) {
    const base = 10.5 + n * step;
    [9.45, 18.9, 28.35].forEach((d, i) => {
      const t = document.createElement('span');
      t.className = i === 1 ? 'absolute top-[4px] w-[1px] h-[4px] bg-[#222]' : 'absolute top-[5px] w-[1px] h-[2px] bg-[#222]';
      t.style.left = (base + d) + 'px';
      if (base + d < 780) hruler.appendChild(t);
    });
    if (n > 0) {
      const s = document.createElement('span');
      s.className = 'absolute top-0 w-[20px] text-center';
      s.style.left = (base - 10) + 'px';
      s.textContent = n;
      hruler.appendChild(s);
    }
  }
  const vruler = document.getElementById('vruler');
  const vstep = 37.7;
  for (let n = 0; n < 13; n++) {
    const base = n * vstep - 1;
    [9.4, 18.9, 28.3].forEach((d, i) => {
      const t = document.createElement('span');
      t.className = i === 1 ? 'absolute left-[3px] h-[1px] w-[5px] bg-[#222]' : 'absolute left-[5px] h-[2px] w-[2px] bg-[#222]';
      t.style.top = (base + d) + 'px';
      vruler.appendChild(t);
    });
    if (n > 0) {
      const s = document.createElement('span');
      s.className = 'absolute left-0 w-[13px] leading-[13px] text-center -translate-y-1/2 [writing-mode:vertical-rl]';
      s.style.top = base + 'px';
      s.textContent = n;
      vruler.appendChild(s);
    }
  }
</script>
</body>
</html>
